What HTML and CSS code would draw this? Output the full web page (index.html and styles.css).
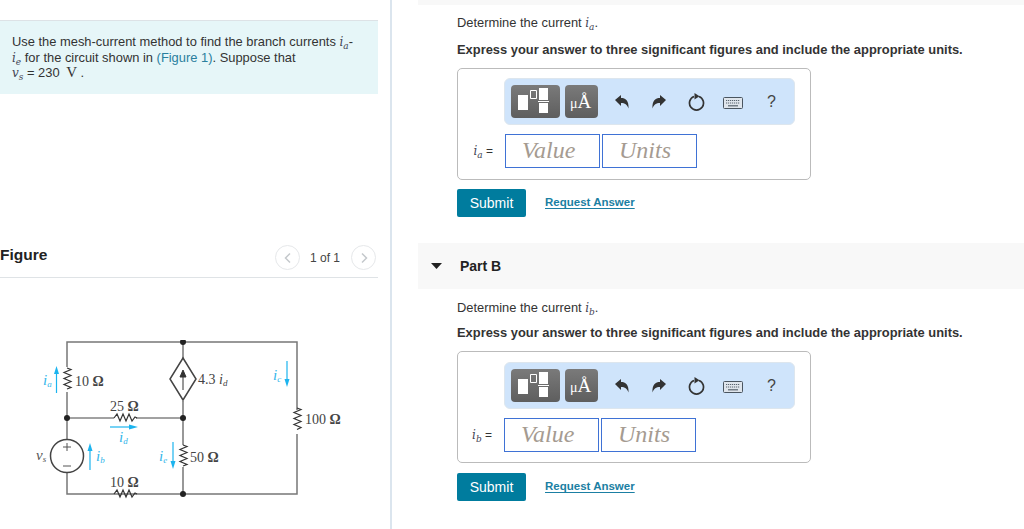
FILE: index.html
```
<!DOCTYPE html>
<html lang="en">
<head>
<meta charset="utf-8">
<title>Mesh-current method</title>
<link rel="stylesheet" href="styles.css">
</head>
<body>
<div class="page">
  <aside class="left">
    <section class="problem">
      <p>Use the mesh-current method to find the branch currents <i class="m">i<sub>a</sub></i>-<br><i class="m">i<sub>e</sub></i> for the circuit shown in <a class="figlink">(Figure 1)</a>. Suppose that<br><i class="m">v<sub>s</sub></i> = 230 <span class="unit">V</span> .</p>
    </section>
    <header class="fighead">
      <h2>Figure</h2>
      <div class="pager">
        <span class="circ"><svg width="10" height="12" viewBox="0 0 10 12"><path d="M7 1.5 2.5 6 7 10.5" fill="none" stroke="#c4c8cc" stroke-width="1.5"/></svg></span>
        <span class="count">1 of 1</span>
        <span class="circ"><svg width="10" height="12" viewBox="0 0 10 12"><path d="M3 1.5 7.5 6 3 10.5" fill="none" stroke="#c4c8cc" stroke-width="1.5"/></svg></span>
      </div>
    </header>
    <svg class="circuit" width="378" height="189" viewBox="0 0 378 189">
      <g fill="none" stroke="#777" stroke-width="1.5">
        <path d="M67 27V2H297V70"/>
        <path d="M297 94V154H67V133"/>
        <path d="M67 99V52"/>
        <path d="M183 2V19M183 61V105M183 127V154"/>
      </g>
      <path d="M67 78H114M136 78H183" stroke="#444" stroke-width="1" fill="none"/>
      <g fill="none" stroke="#333" stroke-width="1.2">
        <path d="M67 28l4 1.5-7 3 7 3-7 3 7 3-7 3 7 3-4 1.500"/>
        <path d="M297 68l4 1.500-7 3 7 3-7 3 7 3-7 3 7 3-4 2"/>
        <path d="M183 105l4 1.500-7 3 7 3-7 3 7 3-7 3 7 3-4 1.500"/>
        <path d="M114 78l3-4 3 7 3-7 3 7 3-7 3 7 3-4 2 1"/>
        <path d="M114 154l3-4 3 7 3-7 3 7 3-7 3 7 3-4 2 1"/>
        <path d="M183 18 196 39 183 60 170 39Z" stroke="#444" stroke-width="1.5"/>
        <circle cx="67" cy="116" r="16.5" stroke="#444" stroke-width="1.5" fill="#fff"/>
      </g>
      <g fill="#222"><circle cx="67" cy="78" r="3"/><circle cx="183" cy="2" r="3"/><circle cx="183" cy="78" r="3"/><circle cx="183" cy="154" r="3"/></g>
      <path d="M183 50V32M183 30l-3 7h6Z" stroke="#333" fill="#333"/>
      <path d="M63 107h8M67 103v8M63 126h8" stroke="#555" fill="none"/>
      <g stroke="#1cb4ef" stroke-width="1.2" fill="#1cb4ef">
        <path d="M56.500 53V33" fill="none"/><path d="M56.500 26l-2.500 8h5Z" stroke="none"/>
        <path d="M90 130V109" fill="none"/><path d="M90 103l-2.500 8h5Z" stroke="none"/>
        <path d="M110 87H132" fill="none"/><path d="M138 87l-9-2.500v5Z" stroke="none"/>
        <path d="M173 102V124" fill="none"/><path d="M173 129l-2.500-8h5Z" stroke="none"/>
        <path d="M287 21V40" fill="none"/><path d="M287 47l-2.500-8h5Z" stroke="none"/>
      </g>
      <g class="val">
        <text x="75" y="46">10 <tspan class="ohm">Ω</tspan></text>
        <text x="110" y="71">25 <tspan class="ohm">Ω</tspan></text>
        <text x="110" y="147">10 <tspan class="ohm">Ω</tspan></text>
        <text x="198" y="44">4.3 <tspan class="var">i</tspan><tspan class="subs" dy="2">d</tspan></text>
        <text x="305" y="84">100 <tspan class="ohm">Ω</tspan></text>
        <text x="190" y="122">50 <tspan class="ohm">Ω</tspan></text>
      </g>
      <g class="blue">
        <text x="43" y="45">i<tspan class="subs" dy="2">a</tspan></text>
        <text x="96" y="121">i<tspan class="subs" dy="2">b</tspan></text>
        <text x="119" y="102">i<tspan class="subs" dy="2">d</tspan></text>
        <text x="159" y="121">i<tspan class="subs" dy="2">e</tspan></text>
        <text x="273" y="40">i<tspan class="subs" dy="2">c</tspan></text>
      </g>
      <text class="vs" x="36" y="120">v<tspan class="subs" dy="2">s</tspan></text>
    </svg>
  </aside>
  <div class="divider"></div>
  <main class="right">
    <div class="strip"></div>
    <section class="part first">
      <p class="q">Determine the current <i class="m">i<sub>a</sub></i>.</p>
      <p class="ins">Express your answer to three significant figures and include the appropriate units.</p>
      <div class="box">
        <div class="bar">
          <span class="tool wide"><svg width="49" height="33" viewBox="0 0 49 33"><path d="M7 10h10v15H7z" fill="#fff"/><path d="M19.5 5.500h6v8h-6z" fill="none" stroke="#fff"/><path d="M28 3h9v12h-9zM28 18h9v10h-9z" fill="#fff"/><path d="M27 16.500h11" stroke="#fff"/></svg></span>
          <span class="tool mu"><small>μ</small>Å</span>
          <svg class="ic" width="14" height="14" viewBox="0 0 14 14"><path d="M0 5 6 0v3c4.500 0 8 2.500 7.500 10.500C12 9.500 10 8 6 8v3Z" fill="#333"/></svg>
          <svg class="ic" width="14" height="14" viewBox="0 0 14 14"><path d="M14 5 8 0v3C3.500 3 0 5.500.5 13.500 2 9.500 4 8 8 8v3Z" fill="#333"/></svg>
          <svg class="ic" width="18" height="18" viewBox="0 0 18 18"><path d="M6 3.500a7 7 0 1 0 5 0" fill="none" stroke="#333" stroke-width="1.700"/><path d="M6.500 0v6.500l5-3.200Z" fill="#333"/></svg>
          <svg class="ic kbd" width="20" height="12" viewBox="0 0 20 12"><rect x=".5" y=".5" width="19" height="11" rx="1" fill="#dfe5ec" stroke="#4a5560"/><path d="M3 3.500h14M3 6h14" stroke="#59646f" stroke-width="1.200" stroke-dasharray="1.200 .8"/><path d="M5 8.800h10" stroke="#59646f" stroke-width="1.200"/></svg>
          <span class="help">?</span>
        </div>
        <div class="row">
          <span class="lab"><i class="m">i<sub>a</sub></i> =</span>
          <span class="field">Value</span><span class="field">Units</span>
        </div>
      </div>
      <div class="actions"><button class="submit">Submit</button><a class="req">Request Answer</a></div>
    </section>
    <div class="parthead"><svg width="11" height="6" viewBox="0 0 11 6"><path d="M0 0h11L5.500 6Z" fill="#222"/></svg><span>Part B</span></div>
    <section class="part second">
      <p class="q">Determine the current <i class="m">i<sub>b</sub></i>.</p>
      <p class="ins">Express your answer to three significant figures and include the appropriate units.</p>
      <div class="box">
        <div class="bar">
          <span class="tool wide"><svg width="49" height="33" viewBox="0 0 49 33"><path d="M7 10h10v15H7z" fill="#fff"/><path d="M19.5 5.500h6v8h-6z" fill="none" stroke="#fff"/><path d="M28 3h9v12h-9zM28 18h9v10h-9z" fill="#fff"/><path d="M27 16.500h11" stroke="#fff"/></svg></span>
          <span class="tool mu"><small>μ</small>Å</span>
          <svg class="ic" width="14" height="14" viewBox="0 0 14 14"><path d="M0 5 6 0v3c4.500 0 8 2.500 7.500 10.500C12 9.500 10 8 6 8v3Z" fill="#333"/></svg>
          <svg class="ic" width="14" height="14" viewBox="0 0 14 14"><path d="M14 5 8 0v3C3.500 3 0 5.500.5 13.500 2 9.500 4 8 8 8v3Z" fill="#333"/></svg>
          <svg class="ic" width="18" height="18" viewBox="0 0 18 18"><path d="M6 3.500a7 7 0 1 0 5 0" fill="none" stroke="#333" stroke-width="1.700"/><path d="M6.500 0v6.500l5-3.200Z" fill="#333"/></svg>
          <svg class="ic kbd" width="20" height="12" viewBox="0 0 20 12"><rect x=".5" y=".5" width="19" height="11" rx="1" fill="#dfe5ec" stroke="#4a5560"/><path d="M3 3.500h14M3 6h14" stroke="#59646f" stroke-width="1.200" stroke-dasharray="1.200 .8"/><path d="M5 8.800h10" stroke="#59646f" stroke-width="1.200"/></svg>
          <span class="help">?</span>
        </div>
        <div class="row">
          <span class="lab"><i class="m">i<sub>b</sub></i> =</span>
          <span class="field">Value</span><span class="field">Units</span>
        </div>
      </div>
      <div class="actions"><button class="submit">Submit</button><a class="req">Request Answer</a></div>
    </section>
  </main>
</div>
</body>
</html>
```
FILE: styles.css
```
* { box-sizing: border-box; }
html, body { margin: 0; height: 100%; overflow: hidden; background: #fff; }
body { font-family: "Liberation Sans", Arial, sans-serif; font-size: 12.9px; color: #333; }
p { margin: 0; }
.page { display: flex; height: 529px; }
.left { width: 378px; flex: none; padding-top: 20px; }
.divider { width: 2px; flex: none; margin-left: 12px; background: #dbe5ee; }
.right { flex: 1; margin-left: 26px; min-width: 0; }
.problem { height: 74px; background: #e6f6f8; border-top: 1px solid #dde2e6; padding: 13px 12px 0; }
.problem p { line-height: 15.5px; }
.m { font-family: "DejaVu Serif", serif; font-style: italic; font-size: 12px; line-height: 0; color: #445; }
.m sub { font-size: 9px; line-height: 0; }
.figlink { color: #2a7f9e; }
.unit { font-family: "Liberation Serif", serif; font-size: 15px; line-height: 0; margin-left: 3px; }
.fighead { height: 39px; margin-top: 145px; border-bottom: 1px solid #dfe3e6; display: flex; justify-content: space-between; align-items: flex-start; padding-top: 6px; }
.fighead h2 { margin: 0; font-size: 15.5px; line-height: 20px; font-weight: 700; color: #222; }
.pager { display: flex; align-items: center; margin-right: 2px; }
.circ { width: 25px; height: 25px; border: 1px solid #e6e8ea; border-radius: 50%; display: flex; align-items: center; justify-content: center; }
.count { width: 31px; margin: 0 10px; font-size: 12px; color: #444; white-space: nowrap; }
.circuit { display: block; margin-top: 62px; }
.val text { font-family: "Liberation Serif", serif; font-size: 14px; fill: #444; }
.ohm { font-weight: 700; }
.blue text { font-family: "Liberation Serif", serif; font-style: italic; font-size: 15px; fill: #35b6ea; }
.vs { font-family: "Liberation Serif", serif; font-style: italic; font-size: 15px; fill: #555; }
.var { font-style: italic; }
.subs { font-size: 9px; font-style: italic; }
.strip { height: 5px; background: #f8f8f8; }
.part { padding: 0 0 0 39px; }
.part .q { line-height: 16px; padding-top: 10px; }
.second .q { padding-top: 11px; }
.part .ins { font-weight: 700; line-height: 16px; margin-top: 10px; }
.first .ins { margin-top: 11px; }
.second .ins { margin-top: 9px; }
.box { width: 354px; height: 112px; margin-top: 10px; border: 1px solid #bbb; border-radius: 5px; padding: 9px 0 0 46px; }
.second .box { padding-top: 10px; }
.bar { width: 291px; height: 47px; background: #cfe4fb; border: 1px solid #dde6ee; border-radius: 6px; display: flex; align-items: center; padding-left: 6px; }
.tool { height: 33px; border-radius: 4px; background: linear-gradient(#7a7a7a, #5e5e5e); display: flex; align-items: center; justify-content: center; color: #fff; font-family: "Liberation Serif", serif; font-size: 19px; }
.tool small { font-size: 14px; align-self: center; margin-top: 5px; }
.wide { width: 49px; }
.mu { width: 33px; margin-left: 5px; padding-right: 2px; }
.ic { flex: none; }
.kbd { margin-top: 2px; }
.bar .ic:nth-of-type(1) { margin-left: 17px; }
.bar .ic:nth-of-type(2) { margin-left: 23px; }
.bar .ic:nth-of-type(3) { margin-left: 22px; }
.bar .ic:nth-of-type(4) { margin-left: 17px; }
.help { margin-left: 24px; font-size: 16px; color: #444; }
.row { display: flex; align-items: center; height: 34px; margin-top: 9px; gap: 2px; margin-left: 1px; position: relative; }
.second .row { margin-left: 0; }
.lab { position: absolute; right: 100%; margin-right: 12px; white-space: nowrap; font-size: 12px; }
.field { width: 95px; height: 34px; border: 1px solid #3f72d5; font-family: "Liberation Serif", serif; font-style: italic; font-size: 24px; color: #a59b91; line-height: 30px; padding-left: 16px; }
.actions { display: flex; align-items: flex-start; margin-top: 9px; }
.second .actions { margin-top: 10px; }
.submit { width: 69px; height: 28px; background: #007c9e; border: 0; border-radius: 2px; color: #fff; font: 14px "Liberation Sans", sans-serif; }
.req { margin-left: 19px; color: #1b7fa3; text-decoration: underline; text-underline-offset: 2px; font-size: 11.5px; font-weight: 700; line-height: 26px; }
.parthead { height: 46px; margin-top: 26px; background: #f8f8f8; display: flex; align-items: center; padding-left: 13px; }
.parthead span { margin-left: 18px; font-size: 14px; font-weight: 700; color: #222; }
```
